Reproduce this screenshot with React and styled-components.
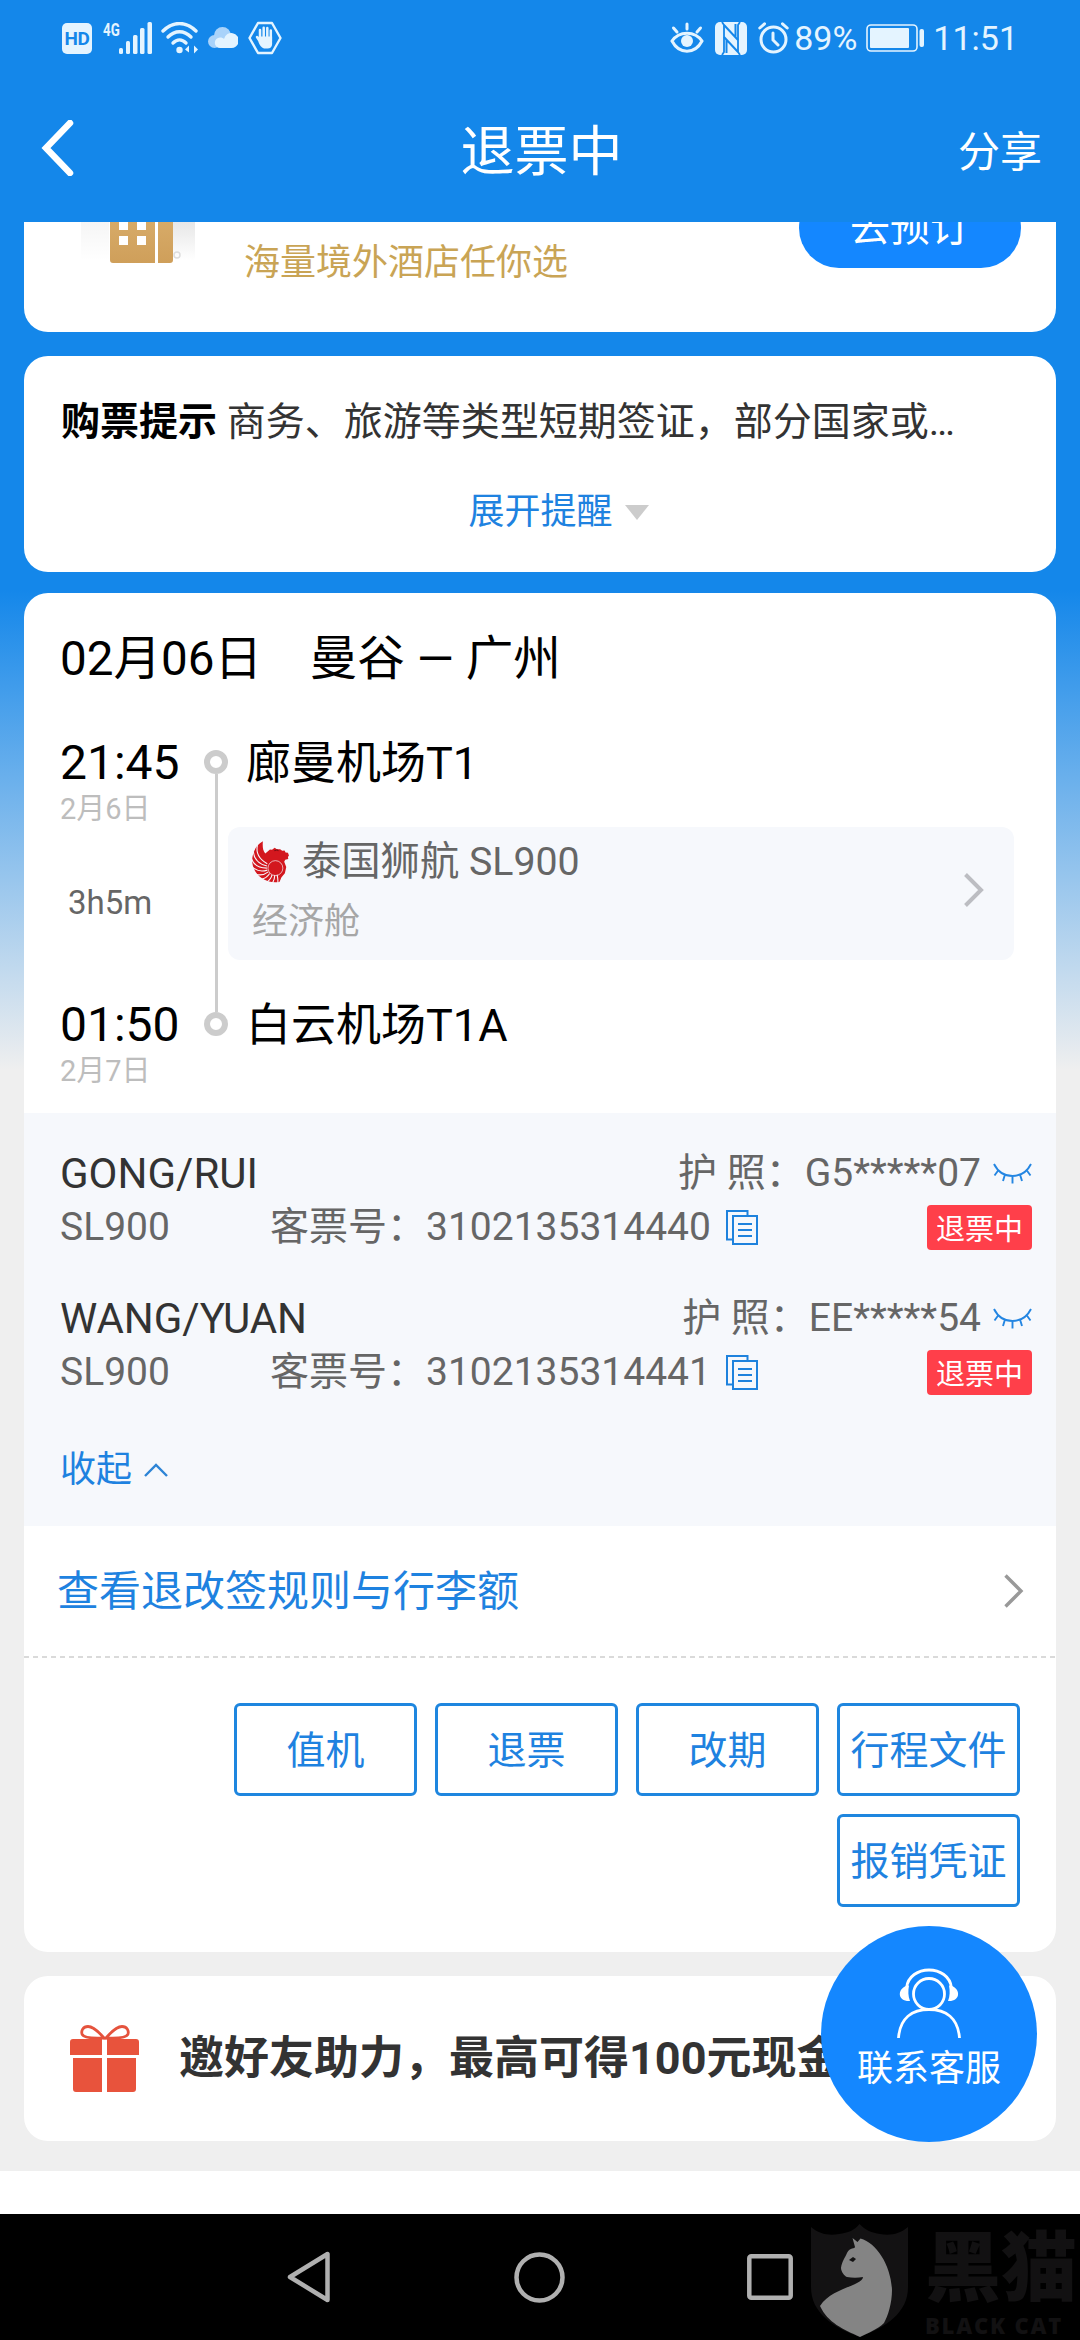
import { useState } from "react";

import styled, { createGlobalStyle } from 'styled-components';

const GlobalStyle = createGlobalStyle`
  * { box-sizing: border-box; }
  body {
    margin: 0;
    background: #fff;
    font-family: Roboto, "Noto Sans CJK SC", sans-serif;
  }
  button {
    font-family: inherit;
    padding: 0;
    border: 0;
    background: none;
    cursor: pointer;
  }
  svg { display: block; flex: none; }
`;

const Screen = styled.div`
  position: relative;
  display: flex;
  flex-direction: column;
  width: 1080px;
  height: 2340px;
  overflow: hidden;
  background: #fff;
`;

const Header = styled.header`
  flex: none;
  height: 222px;
  background: #1487ea;
  color: #fff;
`;

const StatusBar = styled.div`
  display: flex;
  justify-content: space-between;
  height: 76px;
  padding: 0 62px 0 62px;
  color: #e4f4ff;
`;

const StatusGroup = styled.div`
  display: flex;
  align-items: center;
`;

const StatusText = styled.span`
  font-size: 34px;
  line-height: 40px;
  margin-left: ${props => props.$left}px;
`;

const StatusIcon = styled.svg`
  margin-left: ${props => props.$left || 0}px;
`;

const HdBadge = styled.span`
  width: 30px;
  height: 31px;
  border-radius: 5px;
  background: #e4f4ff;
  color: #1487ea;
  font-size: 19px;
  font-weight: 700;
  line-height: 31px;
  text-align: center;
  letter-spacing: -0.5px;
`;

const NetworkType = styled.span`
  align-self: flex-start;
  width: 16px;
  margin: 20px 0 0 11px;
  font-size: 19px;
  font-weight: 700;
  line-height: 20px;
  transform: scaleX(0.7);
  transform-origin: left;
`;

const TitleBar = styled.div`
  display: grid;
  grid-template-columns: 1fr auto 1fr;
  align-items: center;
  height: 146px;
  padding: 8px 38px 0 41px;
`;

const Title = styled.h1`
  margin: 0;
  font-size: 54px;
  font-weight: 400;
  line-height: 64px;
`;

const BackButton = styled.button`
  justify-self: start;
  margin-top: -10px;
`;

const ShareButton = styled.button`
  justify-self: end;
  color: #fff;
  font-size: 42px;
  line-height: 50px;
`;

const Content = styled.main`
  flex: none;
  display: flex;
  flex-direction: column;
  height: 1949px;
  padding: 0 24px;
  overflow: hidden;
  background: linear-gradient(#1487ea 0, #1487ea 368px, #efefef 848px);
`;

const Card = styled.section`
  flex: none;
  border-radius: 24px;
  background: #fff;
  overflow: hidden;
`;

// Scrolled partly under the header
const HotelCard = styled(Card)`
  display: flex;
  height: 174px;
  margin-top: -64px;
  padding: 14px 35px 0 56px;
`;

const HotelText = styled.p`
  margin: 67px 0 0 48px;
  flex: 1;
  color: #c9a455;
  font-size: 36px;
  line-height: 48px;
`;

const BookButton = styled.button`
  width: 222px;
  height: 80px;
  margin-top: 16px;
  border-radius: 40px;
  background: #1487ff;
  color: #fff;
  font-size: 40px;
  line-height: 80px;
`;

const TipCard = styled(Card)`
  display: flex;
  flex-direction: column;
  height: 216px;
  margin-top: 24px;
  padding: 41px 36px 0 37px;
`;

const TipText = styled.p`
  margin: 0;
  color: #333;
  font-size: 39px;
  line-height: 50px;
  white-space: nowrap;

  b { color: #000; }
`;

const ExpandButton = styled.button`
  display: flex;
  align-items: center;
  align-self: center;
  gap: 12px;
  margin: 41px 0 0 36px;
  color: #1e82e0;
  font-size: 36px;
  line-height: 48px;
`;

const TripCard = styled(Card)`
  height: 1359px;
  margin-top: 21px;
  padding-top: 36px;
`;

const TripTitle = styled.h2`
  margin: 0;
  padding-left: 36px;
  color: #000;
  font-size: 47.6px;
  font-weight: 400;
  line-height: 60px;
  white-space: pre;
`;

const Timeline = styled.div`
  display: grid;
  grid-template-columns: 144px 24px 786px;
  grid-template-rows: 90px 172px 114px;
  height: 376px;
  margin-top: 48px;
  padding-left: 36px;
`;

const Time = styled.div`
  color: #000;
  font-size: 48px;
  line-height: 52px;
`;

const TimeDate = styled.div`
  margin-top: 4px;
  color: #bdbdbd;
  font-size: 29px;
  line-height: 32px;
`;

const Duration = styled.div`
  padding: 56px 0 0 8px;
  color: #666;
  font-size: 33px;
  line-height: 40px;
`;

const Rail = styled.div`
  grid-row: 1 / 4;
  grid-column: 2;
  display: flex;
  flex-direction: column;
  align-items: center;
  height: 286px;
  margin-top: 13px;
`;

const RailDot = styled.span`
  width: 24px;
  height: 24px;
  border: 6px solid #ccc;
  border-radius: 50%;
`;

const RailLine = styled.span`
  flex: 1;
  width: 3px;
  background: #ccc;
`;

const Airport = styled.div`
  padding-left: 18px;
  color: #000;
  font-size: 45px;
  line-height: 53px;
`;

const FlightBox = styled.div`
  display: flex;
  justify-content: space-between;
  height: 133px;
  padding: 10px 30px 0 24px;
  border-radius: 12px;
  background: #f6f8fc;
`;

const FlightName = styled.div`
  display: flex;
  align-items: center;
  gap: 12px;
  color: #666;
  font-size: 39.3px;
  line-height: 50px;
`;

const Cabin = styled.div`
  margin-top: 10px;
  color: #a6a6a6;
  font-size: 36px;
  line-height: 50px;
`;

const FlightArrow = styled.span`
  margin-top: 36px;
`;

const Passengers = styled.div`
  height: 413px;
  padding: 33px 24px 0 36px;
  background: #f6f8fc;
`;

const Passenger = styled.div`
  display: grid;
  grid-template-rows: 54px 54px;
  margin-bottom: 37px;
`;

const PassengerLine = styled.div`
  display: flex;
  align-items: center;
  color: #666;
  font-size: 39px;
  line-height: 54px;
  white-space: nowrap;
`;

const PassengerName = styled.span`
  flex: 1;
  padding-top: 1px;
  color: #333;
  font-size: 42px;
  line-height: 56px;
`;

const Passport = styled.span`
  margin-right: 12px;
`;

const FlightNo = styled.span`
  width: 210px;
`;

const TicketNo = styled.span`
  width: 441px;
`;

const CopyButton = styled.button`
  margin-left: 15px;
`;

const Tag = styled.span`
  width: 105px;
  height: 45px;
  margin-left: auto;
  border-radius: 4px;
  background: #ff3f4a;
  color: #fff;
  font-size: 29px;
  line-height: 50px;
  text-align: center;
`;

const CollapseButton = styled.button`
  display: flex;
  align-items: center;
  gap: 12px;
  margin-top: 46px;
  color: #1e82e0;
  font-size: 36px;
  line-height: 50px;
`;

const RulesRow = styled.div`
  display: flex;
  align-items: center;
  justify-content: space-between;
  height: 130px;
  padding: 0 32px 0 33px;
  color: #1e82e0;
  font-size: 42px;
  line-height: 52px;

  span { padding-top: 2px; }
`;

const Dashes = styled.div`
  height: 2px;
  background: repeating-linear-gradient(90deg, #dadada 0 5px, #fff 5px 9px);
`;

const Actions = styled.div`
  display: flex;
  flex-wrap: wrap;
  justify-content: flex-end;
  gap: 18px;
  padding: 45px 36px 0;
`;

const ActionButton = styled.button`
  width: 183px;
  height: 93px;
  padding-top: 4px;
  border: 3px solid #1e86df;
  border-radius: 6px;
  color: #1e82e0;
  font-size: 39px;
  line-height: 83px;
  white-space: nowrap;
`;

const PromoCard = styled(Card)`
  display: flex;
  align-items: center;
  height: 165px;
  margin-top: 24px;
  padding-left: 46px;
  gap: 39px;
`;

const PromoText = styled.span`
  margin-bottom: 8px;
  color: #333;
  font-size: 45px;
  font-weight: 700;
  white-space: nowrap;
`;

const ServiceButton = styled.button`
  position: absolute;
  right: 43px;
  top: 1926px;
  display: flex;
  flex-direction: column;
  align-items: center;
  gap: 6px;
  width: 216px;
  height: 216px;
  padding-top: 42px;
  border-radius: 50%;
  background: #1487ff;
  color: #fff;
  font-size: 36px;
  line-height: 48px;
`;

const SystemNav = styled.nav`
  display: flex;
  align-items: center;
  justify-content: space-between;
  height: 126px;
  margin-top: auto;
  padding: 0 287px;
  background: #000;
`;

const Watermark = styled.div`
  position: absolute;
  right: 0;
  bottom: 0;
  display: flex;
  gap: 16px;
  width: 269px;
  height: 116px;
  color: #121112;
`;

const WatermarkText = styled.div`
  font-size: 76px;
  font-weight: 900;
  line-height: 90px;
  white-space: nowrap;

  small {
    display: block;
    font-family: "Open Sans", sans-serif;
    font-size: 22px;
    font-weight: 800;
    letter-spacing: 1.8px;
    line-height: 22px;
  }
`;

const StatusLeft = () => (
  <StatusGroup>
    <HdBadge>HD</HdBadge>
    <NetworkType>4G</NetworkType>
    <StatusIcon width="34" height="32" viewBox="0 0 34 32" fill="currentColor">
      <rect x="0" y="26" width="4" height="6" rx="1.5" />
      <rect x="7" y="19" width="4" height="13" rx="1.5" />
      <rect x="14" y="13" width="4.5" height="19" rx="1.5" />
      <rect x="21" y="6" width="4.5" height="26" rx="1.5" />
      <rect x="28.5" y="0" width="4.5" height="32" rx="1.5" />
    </StatusIcon>
    <StatusIcon $left={8} width="38" height="32" viewBox="0 0 38 32" fill="none" stroke="currentColor" strokeWidth="3.4" strokeLinecap="round">
      <path d="M2 9C12-1 25-1 35 9" />
      <path d="M7 15c7-7 16-7 23 0" />
      <path d="M12 21c4-4 9-4 13 0" />
      <circle cx="18.5" cy="28" r="3.2" fill="currentColor" stroke="none" />
      <path d="M24 27.500l4-4v7zM37 27.500l-4 4v-8z" fill="currentColor" stroke="none" />
    </StatusIcon>
    <StatusIcon $left={9} width="30" height="22" viewBox="0 0 30 22">
      <circle cx="6.500" cy="14.500" r="6.500" fill="#a9d3fa" />
      <circle cx="14.500" cy="8.500" r="8.500" fill="#a9d3fa" />
      <path d="M12 21a5.200 5.200 0 0 1 0-10.400c2 0 3 .6 4 1.400A7.500 7.500 0 1 1 22.500 21z" fill="#e4f4ff" />
    </StatusIcon>
    <StatusIcon $left={10} width="34" height="34" viewBox="0 0 34 34">
      <path d="M10 2h14l8.500 15L24 32H10L1.500 17z" fill="none" stroke="currentColor" strokeWidth="2.400" strokeLinejoin="round" />
      <path d="M12 20V9M15.700 18V6.800M19.300 18V7M22.800 20V9.500M13 22l-4-6" stroke="currentColor" strokeWidth="2.500" strokeLinecap="round" />
      <path d="M10.700 15.500h13.400V23c0 3-2 4.500-4.500 4.500h-2.500c-3 0-5-2.500-6.400-6z" fill="currentColor" />
    </StatusIcon>
  </StatusGroup>
);

const StatusRight = () => (
  <StatusGroup>
    <StatusIcon width="34" height="32" viewBox="0 0 34 32" fill="none" stroke="currentColor" strokeWidth="3" strokeLinecap="round">
      <path d="M2 19C9 8.500 25 8.500 32 19 25 32.500 9 32.500 2 19z" />
      <circle cx="17" cy="19" r="6" fill="currentColor" stroke="none" />
      <path d="M17 7V2M7 10L3.500 6M27 10l3.500-4" />
    </StatusIcon>
    <StatusIcon $left={11} width="32" height="33" viewBox="0 0 32 33">
      <rect width="32" height="33" rx="5" fill="currentColor" />
      <path d="M7 0l2 3v27l-2 3M25 33l-2-3V3l2-3" fill="none" stroke="#1487ea" strokeWidth="1.800" />
      <path d="M9 3l14 15M9 15l14 15M11.500 17.500V31M20.500 2v13" fill="none" stroke="#1487ea" strokeWidth="2" />
    </StatusIcon>
    <StatusIcon $left={11} width="31" height="32" viewBox="0 0 31 32" fill="none" stroke="currentColor" strokeWidth="3" strokeLinecap="round">
      <circle cx="15.500" cy="17.500" r="12.500" />
      <path d="M15 11v7l5 5M1.800 6L6.500 1.800M29.200 6l-4.700-4.200" />
    </StatusIcon>
    <StatusText $left={5}>89%</StatusText>
    <StatusIcon $left={9} width="59" height="28" viewBox="0 0 59 28">
      <rect x="1" y="1" width="50" height="26" rx="4" fill="none" stroke="currentColor" strokeWidth="1.600" />
      <rect x="4" y="4" width="39" height="20" rx="1" fill="currentColor" />
      <rect x="53.500" y="5" width="4.500" height="18" rx="2" fill="currentColor" />
    </StatusIcon>
    <StatusText $left={8}>11:51</StatusText>
  </StatusGroup>
);

const HotelIcon = () => (
  <svg width="116" height="100" viewBox="0 0 116 100">
    <defs>
      <linearGradient id="gold" x1="0" y1="0" x2="0" y2="1">
        <stop offset="0" stopColor="#e0b878" />
        <stop offset="1" stopColor="#cf9f5a" />
      </linearGradient>
      <linearGradient id="mist" x1="0" y1="0" x2="0" y2="1">
        <stop offset="0" stopColor="#d4d4d4" />
        <stop offset="0.950" stopColor="#fff" />
      </linearGradient>
    </defs>
    <path d="M1 20h28v72H1z" fill="url(#mist)" opacity="0.400" />
    <path d="M93 20h22v72H93z" fill="url(#mist)" />
    <path d="M30 0h45v91H33a3 3 0 0 1-3-3zM78 40h15v48a3 3 0 0 1-3 3H78z" fill="url(#gold)" />
    <path d="M39 49h9v9h-9zM57 49h9v9h-9zM39 64h9v9h-9zM57 64h9v9h-9z" fill="#fff" />
    <circle cx="97" cy="83" r="3" fill="none" stroke="#ddd" strokeWidth="1.500" />
  </svg>
);

const LionIcon = () => (
  <svg width="38" height="42" viewBox="28 34 112 124">
    <path
      fill="#d3171e"
      d="M60 35C36 48 26 76 29 100c4 32 38 62 80 55l6-14 10-12 4-18-6-16 3-6 9-2-1-6 3-4-3-8-7-1-3-6-7 1-6-5-10 0-6-4-8 6-6-1-6 5-8 7C59 62 59 48 60 35z"
    />
    {/* gaps between the wing feathers */}
    <g fill="none" stroke="#f6f8fc" strokeWidth="3.2">
      <path d="M44 46c-5 22 6 42 29 55" />
      <path d="M32 66c2 20 16 36 40 42" />
      <path d="M27 88c7 18 22 26 45 26" />
      <path d="M29 111c13 12 28 14 44 9" />
      <path d="M38 132c14 4 28 1 38-7" />
      <path d="M52 148c12-2 23-10 28-18" />
      <path d="M70 157c9-6 15-14 17-23" />
      <path d="M88 159c5-8 7-16 7-24" />
      <path d="M104 158c1-8 0-16-2-24" />
      <circle cx="97" cy="114" r="22" strokeWidth="2" />
    </g>
    <path d="M94 63l8-3 4 3" fill="none" stroke="#7a0b10" strokeWidth="3" />
  </svg>
);

const EyeClosedIcon = () => (
  <svg width="39" height="21" viewBox="0 0 39 21" fill="none" stroke="#2486e2" strokeWidth="1.900">
    <path d="M1 1c8 16 29 16 37 0M5.500 7L1.500 12.500M12 11.500l-2 6.500M19.500 13v7.500M27 11.500l2 6.500M33.500 7l4 5.500" />
  </svg>
);

const CopyIcon = () => (
  <svg width="32" height="35" viewBox="0 0 32 35" fill="none" stroke="#1e82dd" strokeWidth="2">
    <path d="M21.500 5V1H1v28.500h6" />
    <path d="M7 6h24v28H7zM12 14h14M12 20h14M12 26h14" />
  </svg>
);

const Chevron = ({ color, stroke }) => (
  <svg width="20" height="34" viewBox="0 0 20 34" fill="none">
    <path d="M1.500 1.500L17 17 1.500 32.500" stroke={color} strokeWidth={stroke} />
  </svg>
);

const GiftIcon = () => (
  <svg width="70" height="67" viewBox="0 0 70 67">
    <g fill="none" stroke="#e5533d" strokeWidth="2.800">
      <path d="M34 13C28 6 22 1.500 18 1.500c-5 0-7 4-6 7.500 1.500 4 12 4.500 22 4z" />
      <path d="M36 13C42 6 48 1.500 52 1.500c5 0 7 4 6 7.500-1.500 4-12 4.500-22 4z" />
    </g>
    <path d="M3 14h29v16H0V17a3 3 0 0 1 3-3zM37 14h29a3 3 0 0 1 3 3v13H37zM3 33h29v34H6a3 3 0 0 1-3-3zM37 33h29v31a3 3 0 0 1-3 3H37z" fill="#e8533c" />
  </svg>
);

const ServiceIcon = () => (
  <svg width="64" height="71" viewBox="0 0 64 71" fill="none" stroke="#fff" strokeWidth="2.800">
    <circle cx="32" cy="26" r="15.500" />
    <path d="M9.500 20C12-4 52-4 54.500 20" />
    <path d="M1.500 70C3 50 15 41.500 32 41.500S61 50 62.500 70" />
    <path d="M10 17.500c-9 3-10 14 0 15.500h3c-2-5-2-10-1-15.500zM54 17.500c9 3 10 14 0 15.500h-3c2-5 2-10 1-15.500z" fill="#fff" stroke="none" />
  </svg>
);

const CatShield = () => (
  <svg width="98" height="113" viewBox="0 0 98 113">
    <path d="M0 3c8 7 18 9 28 7 9-1 16-4 20.500-10C54 6 61 9 69 10c10 2 20 0 28-7v60c0 26-22 40-48.500 50C22 103 0 89 0 63z" fill="#131213" />
    <path d="M41.500 14l5 4 3-3.500C66 19 80 42 81 66c0 13-4 26-8 33-6 6-16 10-24 14C32 105 17 99 9 82c9-14 28-18 37-23 4-2 6-4 6-6-5 1-11 1-16 0-3-1-6-6-6-9 1-7 4-10 6-15 3-6 8-4 8-6z" fill="#848484" />
    <path d="M38 36l4-3 3 2-3 3z" fill="#131213" />
  </svg>
);

const passengers = [
  { name: 'GONG/RUI', passport: 'G5*****07', ticket: '3102135314440' },
  { name: 'WANG/YUAN', passport: 'EE*****54', ticket: '3102135314441' },
];

const actions = ['值机', '退票', '改期', '行程文件', '报销凭证'];

function App() {
  const [expanded, setExpanded] = useState(true);

  return (
    <>
      <GlobalStyle />
      <Screen>
        <Header>
          <StatusBar>
            <StatusLeft />
            <StatusRight />
          </StatusBar>
          <TitleBar>
            <BackButton aria-label="back">
              <svg width="33" height="56" viewBox="0 0 33 56" fill="none">
                <path d="M29 3L5 28l24 25" stroke="#fff" strokeWidth="6.500" strokeLinecap="round" strokeLinejoin="miter" />
              </svg>
            </BackButton>
            <Title>退票中</Title>
            <ShareButton>分享</ShareButton>
          </TitleBar>
        </Header>

        <Content>
          <HotelCard>
            <HotelIcon />
            <HotelText>海量境外酒店任你选</HotelText>
            <BookButton>去预订</BookButton>
          </HotelCard>

          <TipCard>
            <TipText><b>购票提示</b> 商务、旅游等类型短期签证，部分国家或…</TipText>
            <ExpandButton>
              展开提醒
              <svg width="24" height="15" viewBox="0 0 24 15"><path d="M0 0h24L12 15z" fill="#ccc" /></svg>
            </ExpandButton>
          </TipCard>

          <TripCard>
            <TripTitle>02月06日　曼谷 — 广州</TripTitle>
            <Timeline>
              <div>
                <Time>21:45</Time>
                <TimeDate>2月6日</TimeDate>
              </div>
              <Rail>
                <RailDot />
                <RailLine />
                <RailDot />
              </Rail>
              <Airport>廊曼机场T1</Airport>
              <Duration>3h5m</Duration>
              <FlightBox>
                <div>
                  <FlightName><LionIcon />泰国狮航 SL900</FlightName>
                  <Cabin>经济舱</Cabin>
                </div>
                <FlightArrow><Chevron color="#bcbdc2" stroke={4} /></FlightArrow>
              </FlightBox>
              <div>
                <Time>01:50</Time>
                <TimeDate>2月7日</TimeDate>
              </div>
              <Airport>白云机场T1A</Airport>
            </Timeline>

            <Passengers>
              {expanded && passengers.map((p) => (
                <Passenger key={p.ticket}>
                  <PassengerLine>
                    <PassengerName>{p.name}</PassengerName>
                    <Passport>护 照：{p.passport}</Passport>
                    <EyeClosedIcon />
                  </PassengerLine>
                  <PassengerLine>
                    <FlightNo>SL900</FlightNo>
                    <TicketNo>客票号：{p.ticket}</TicketNo>
                    <CopyButton aria-label="copy"><CopyIcon /></CopyButton>
                    <Tag>退票中</Tag>
                  </PassengerLine>
                </Passenger>
              ))}
              <CollapseButton onClick={() => setExpanded(!expanded)}>
                收起
                <svg width="24" height="14" viewBox="0 0 24 14" fill="none">
                  <path d="M1 13L12 2l11 11" stroke="#2d84d6" strokeWidth="2.400" />
                </svg>
              </CollapseButton>
            </Passengers>

            <RulesRow>
              <span>查看退改签规则与行李额</span>
              <Chevron color="#999" stroke={3.4} />
            </RulesRow>
            <Dashes />
            <Actions>
              {actions.map((label) => <ActionButton key={label}>{label}</ActionButton>)}
            </Actions>
          </TripCard>

          <PromoCard>
            <GiftIcon />
            <PromoText>邀好友助力，最高可得100元现金</PromoText>
          </PromoCard>
        </Content>

        <SystemNav>
          <svg width="44" height="52" viewBox="0 0 44 52" fill="none" stroke="#b0b0b0" strokeWidth="4.500" strokeLinejoin="round">
            <path d="M40.500 3v46L3 26z" />
          </svg>
          <svg width="51" height="51" viewBox="0 0 51 51" fill="none" stroke="#b0b0b0" strokeWidth="4.500">
            <circle cx="25.500" cy="25.500" r="23" />
          </svg>
          <svg width="46" height="46" viewBox="0 0 46 46" fill="none" stroke="#b0b0b0" strokeWidth="4.500">
            <rect x="2.300" y="2.300" width="41.400" height="41.400" rx="2" />
          </svg>
        </SystemNav>

        <Watermark>
          <CatShield />
          <WatermarkText>
            黑猫
            <small>BLACK CAT</small>
          </WatermarkText>
        </Watermark>

        <ServiceButton>
          <ServiceIcon />
          联系客服
        </ServiceButton>
      </Screen>
    </>
  );
}

export default App;
